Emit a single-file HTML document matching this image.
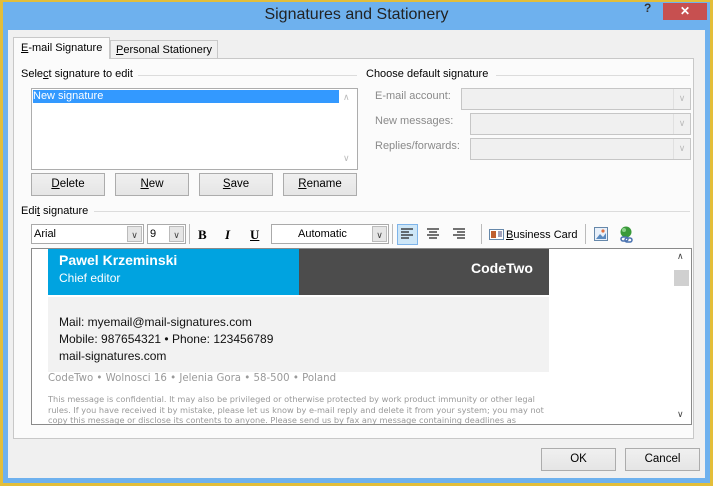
<!DOCTYPE html>
<html><head><meta charset="utf-8"><style>
*{box-sizing:border-box;margin:0;padding:0}
body{width:713px;height:486px;background:#e3be3a;font-family:"Liberation Sans",sans-serif;font-size:11px;color:#000;position:relative;overflow:hidden}
.a{position:absolute}
.win{left:3px;top:2px;width:707px;height:481px;background:#6eb1ee}
.body{left:8px;top:30px;width:697px;height:448px;background:#f0f0f0}
.t{position:absolute;white-space:nowrap}
.btn{position:absolute;height:23px;border:1px solid #acacac;background:linear-gradient(#f0f0f0,#e5e5e5);text-align:center;line-height:21px;font-size:11.5px}
.combo{position:absolute;border:1px solid #c6c6c6;background:#f0f0f0}
.combo .arr{position:absolute;right:0;top:0;bottom:0;width:17px;border-left:1px solid #e0e0e0;color:#bbb;font-size:9px;text-align:center;padding-top:4px}
.combo2{position:absolute;border:1px solid #aaa;background:#fff}
.combo2 .arr{position:absolute;right:1px;top:1px;bottom:1px;width:15px;background:#e6e6e6;border:1px solid #bbb;color:#444;font-size:9px;text-align:center;padding-top:3px}
.line{position:absolute;height:1px;background:#dcdcdc}
u{text-decoration:underline}
.g{color:#8a8a8a}
</style></head><body>
<div class="a win"></div>
<div class="t" style="left:0;width:713px;text-align:center;top:6px;font-size:16px;color:#222">Signatures and Stationery</div>
<div class="t" style="left:644px;top:1px;font-size:12px;font-weight:bold;color:#333">?</div>
<div class="a" style="left:663px;top:3px;width:44px;height:17px;background:#c75050;color:#fff;text-align:center;font-size:12px;line-height:17px;font-weight:bold">✕</div>
<div class="a body"></div>
<!-- tabs -->
<div class="a" style="left:110px;top:40px;width:108px;height:19px;border:1px solid #c8c8c8;border-bottom:none;background:#f0f0f0"></div>
<div class="t" style="left:116px;top:44px"><u>P</u>ersonal Stationery</div>
<div class="a" style="left:13px;top:58px;width:681px;height:381px;border:1px solid #c8c8c8;background:#fbfbfb"></div>
<div class="a" style="left:13px;top:37px;width:97px;height:22px;border:1px solid #c8c8c8;border-bottom:none;background:#fbfbfb"></div>
<div class="t" style="left:21px;top:42px"><u>E</u>-mail Signature</div>
<div class="t" style="left:21px;top:68px">Sele<u>c</u>t signature to edit</div>
<div class="line" style="left:138px;top:75px;width:219px"></div>
<div class="a" style="left:31px;top:88px;width:327px;height:82px;border:1px solid #adadad;background:#fff"></div>
<div class="a" style="left:33px;top:90px;width:306px;height:13px;background:#3399ff"></div>
<div class="t" style="left:33px;top:90px;color:#fff;line-height:13px">New signature</div>
<div class="t" style="left:343px;top:92px;color:#bbb;font-size:9px">∧</div>
<div class="t" style="left:343px;top:153px;color:#bbb;font-size:9px">∨</div>
<div class="btn" style="left:31px;top:173px;width:74px"><u>D</u>elete</div>
<div class="btn" style="left:115px;top:173px;width:74px"><u>N</u>ew</div>
<div class="btn" style="left:199px;top:173px;width:74px"><u>S</u>ave</div>
<div class="btn" style="left:283px;top:173px;width:74px"><u>R</u>ename</div>
<div class="t" style="left:366px;top:68px">Choose default signature</div>
<div class="line" style="left:496px;top:75px;width:194px"></div>
<div class="t g" style="left:375px;top:90px">E-mail account:</div>
<div class="combo" style="left:461px;top:88px;width:230px;height:22px"><div class="arr">∨</div></div>
<div class="t g" style="left:375px;top:115px">New messages:</div>
<div class="combo" style="left:470px;top:113px;width:221px;height:22px"><div class="arr">∨</div></div>
<div class="t g" style="left:375px;top:140px">Replies/forwards:</div>
<div class="combo" style="left:470px;top:138px;width:221px;height:22px"><div class="arr">∨</div></div>
<div class="t" style="left:21px;top:205px">Edi<u>t</u> signature</div>
<div class="line" style="left:94px;top:211px;width:596px"></div>
<!-- toolbar -->
<div class="combo2" style="left:31px;top:224px;width:113px;height:20px"><span class="t" style="left:2px;top:3px">Arial</span><div class="arr">∨</div></div>
<div class="combo2" style="left:147px;top:224px;width:39px;height:20px"><span class="t" style="left:2px;top:3px">9</span><div class="arr">∨</div></div>
<div class="a" style="left:189px;top:224px;width:1px;height:20px;background:#bbb"></div>
<div class="t" style="left:198px;top:227px;font-family:'Liberation Serif',serif;font-weight:bold;font-size:13px">B</div>
<div class="t" style="left:225px;top:227px;font-family:'Liberation Serif',serif;font-style:italic;font-weight:bold;font-size:13px">I</div>
<div class="t" style="left:250px;top:227px;font-family:'Liberation Serif',serif;font-weight:bold;font-size:13px;text-decoration:underline">U</div>
<div class="combo2" style="left:271px;top:224px;width:118px;height:20px"><span class="t" style="left:26px;top:3px">Automatic</span><div class="arr">∨</div></div>
<div class="a" style="left:392px;top:224px;width:1px;height:20px;background:#bbb"></div>
<div class="a" style="left:397px;top:224px;width:21px;height:21px;background:#cde6f7;border:1px solid #7eb4ea"></div>
<svg class="a" style="left:401px;top:228px" width="64" height="12"><g stroke="#222" stroke-width="1.2"><path d="M0 1h12M0 4h8M0 7h12M0 10h8"/><path d="M26 1h12M28 4h8M26 7h12M28 10h8"/><path d="M52 1h12M56 4h8M52 7h12M56 10h8"/></g></svg>
<div class="a" style="left:481px;top:224px;width:1px;height:20px;background:#bbb"></div>
<svg class="a" style="left:489px;top:229px" width="15" height="11"><rect x=".5" y=".5" width="14" height="10" fill="#fff" stroke="#6688aa"/><rect x="2" y="2" width="5" height="7" fill="#c06030"/><path d="M9 3h4M9 5h4M9 7h4" stroke="#447"/></svg>
<div class="t" style="left:506px;top:229px"><u>B</u>usiness Card</div>
<div class="a" style="left:585px;top:224px;width:1px;height:20px;background:#bbb"></div>
<svg class="a" style="left:594px;top:227px" width="14" height="14"><rect x=".5" y=".5" width="13" height="13" fill="#e8f0fa" stroke="#6688aa"/><path d="M2 12l4-5 3 3 3-4v6z" fill="#5a8ac0"/><circle cx="9" cy="4" r="1.6" fill="#e07040"/></svg>
<svg class="a" style="left:618px;top:226px" width="16" height="17"><circle cx="8" cy="6" r="5.5" fill="#3a9a3a"/><circle cx="6" cy="4" r="2" fill="#8bd08b"/><rect x="3" y="11" width="7" height="4" rx="2" fill="none" stroke="#4a72b0" stroke-width="1.5"/><rect x="7" y="12" width="7" height="4" rx="2" fill="none" stroke="#4a72b0" stroke-width="1.5"/></svg>
<!-- editor -->
<div class="a" style="left:31px;top:248px;width:661px;height:177px;border:1px solid #8a8a8a;background:#fff;overflow:hidden">
 <div class="a" style="left:16px;top:0;width:251px;height:46px;background:#00a3e0"></div>
 <div class="a" style="left:267px;top:0;width:250px;height:46px;background:#4c4c4c"></div>
 <div class="t" style="left:27px;top:3px;color:#fff;font-weight:bold;font-size:14px">Pawel Krzeminski</div>
 <div class="t" style="left:27px;top:22px;color:#fff;font-size:12px">Chief editor</div>
 <div class="t" style="left:439px;top:11px;color:#fff;font-weight:bold;font-size:14px">CodeTwo</div>
 <div class="a" style="left:16px;top:48px;width:501px;height:75px;background:#f2f2f2"></div>
 <div class="t" style="left:27px;top:65px;font-size:12px;color:#111;line-height:17px">Mail: myemail@mail-signatures.com<br>Mobile: 987654321 • Phone: 123456789<br>mail-signatures.com</div>
 <div class="t" style="left:16px;top:124px;font-family:'DejaVu Sans',sans-serif;font-size:10.2px;color:#9a9a9a">CodeTwo • Wolnosci 16 • Jelenia Gora • 58-500 • Poland</div>
 <div class="t" style="left:16px;top:145px;font-family:'DejaVu Sans',sans-serif;font-size:8.2px;color:#999;line-height:10.5px">This message is confidential. It may also be privileged or otherwise protected by work product immunity or other legal<br>rules. If you have received it by mistake, please let us know by e-mail reply and delete it from your system; you may not<br>copy this message or disclose its contents to anyone. Please send us by fax any message containing deadlines as</div>
 <div class="a" style="left:641px;top:0;width:18px;height:175px;background:#fff"></div>
 <div class="t" style="left:645px;top:2px;font-size:9px;color:#444">∧</div>
 <div class="a" style="left:642px;top:21px;width:15px;height:16px;background:#d0d0d0"></div>
 <div class="t" style="left:645px;top:160px;font-size:9px;color:#444">∨</div>
</div>
<div class="btn" style="left:541px;top:448px;width:75px"><span>OK</span></div>
<div class="btn" style="left:625px;top:448px;width:75px">Cancel</div>
</body></html>
